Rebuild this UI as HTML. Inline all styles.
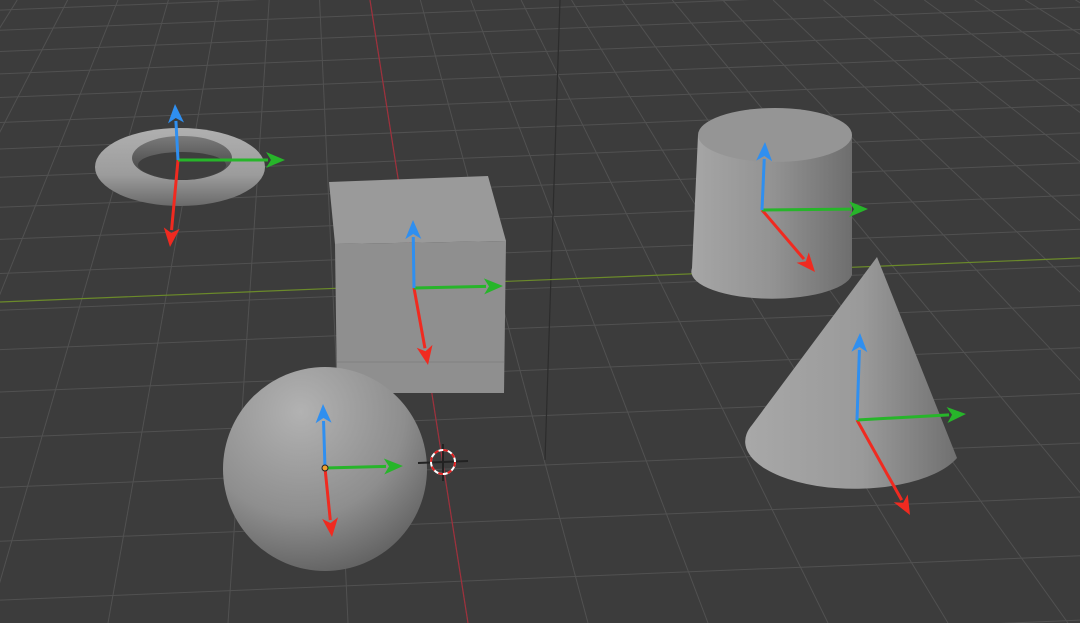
<!DOCTYPE html>
<html><head><meta charset="utf-8"><style>
html,body{margin:0;padding:0;background:#3c3c3c;overflow:hidden;width:1080px;height:623px;position:relative}
svg{display:block;position:absolute;left:0;top:0}
</style></head><body>
<svg id="s" width="1080" height="623" viewBox="0 0 1080 623" xmlns="http://www.w3.org/2000/svg" overflow="hidden">
<defs>
<clipPath id="cp"><rect x="0" y="0" width="1080" height="623"/></clipPath>
<radialGradient id="sph" cx="0.38" cy="0.22" r="0.85">
<stop offset="0" stop-color="#b2b2b2"/><stop offset="0.6" stop-color="#8e8e8e"/><stop offset="1" stop-color="#5c5c5c"/></radialGradient>
<linearGradient id="cyl" x1="0" x2="1" y1="0" y2="0">
<stop offset="0" stop-color="#a6a6a6"/><stop offset="0.5" stop-color="#939393"/><stop offset="1" stop-color="#6e6e6e"/></linearGradient>
<linearGradient id="cone" x1="0" x2="1" y1="0" y2="0">
<stop offset="0" stop-color="#a8a8a8"/><stop offset="0.55" stop-color="#9a9a9a"/><stop offset="1" stop-color="#707070"/></linearGradient>
<linearGradient id="tor" x1="0" x2="0" y1="0" y2="1">
<stop offset="0" stop-color="#b0b0b0"/><stop offset="0.6" stop-color="#9c9c9c"/><stop offset="1" stop-color="#6a6a6a"/></linearGradient>
<linearGradient id="hole" x1="0" x2="0" y1="0" y2="1">
<stop offset="0" stop-color="#7a7a7a"/><stop offset="0.6" stop-color="#555"/><stop offset="1" stop-color="#3c3c3c"/></linearGradient>
</defs>
<g clip-path="url(#cp)">
<g id="grid" stroke="#515151" stroke-width="1" fill="none"></g>
<line x1="560" y1="0" x2="545" y2="460" stroke="#2c2c2c" stroke-width="1.2"/>
<line x1="0" y1="302" x2="1080" y2="258" stroke="#6b8a2a" stroke-width="1.2"/>
<line x1="370" y1="0" x2="468" y2="623" stroke="#a0303c" stroke-width="1.2"/>

<ellipse cx="180" cy="167" rx="85" ry="39" fill="url(#tor)"/>
<ellipse cx="182" cy="158" rx="50" ry="22" fill="url(#hole)"/>
<ellipse cx="182" cy="165" rx="44" ry="13" fill="#3e3e3e"/>

<polygon points="329,182 488,176 506,241 335,244" fill="#9a9a9a"/>
<polygon points="335,244 506,241 504,393 337,393" fill="#8f8f8f"/>
<line x1="337" y1="362" x2="504" y2="362" stroke="#808080"/>

<path d="M698,135 L692,268 A80,27 0 0 0 852,275 L852,135 Z" fill="url(#cyl)"/>
<ellipse cx="775" cy="135" rx="77" ry="27" fill="#959595"/>

<path d="M877,257 L752,425 A104,45 0 0 0 957,458 Z" fill="url(#cone)"/>

<circle cx="325" cy="469" r="102" fill="url(#sph)"/>

<g stroke-width="2">
<line x1="443" y1="444" x2="443" y2="481" stroke="#222"/>
<line x1="418" y1="463" x2="468" y2="461" stroke="#222"/>
<circle cx="443" cy="462" r="12" fill="none" stroke="#fff"/>
<circle cx="443" cy="462" r="12" fill="none" stroke="#e02020" stroke-dasharray="4.7 4.7"/>
</g>

<g id="arrows"></g>
<circle cx="325" cy="468" r="3" fill="#f0a030" stroke="#222" stroke-width="1"/>
</g>
</svg>
<script>
(function(){
var g=document.getElementById('grid'),h='';
for(var n=10;n<60;n++){var y=-772+29880/(n+0.05);if(y<-20||y>650)continue;
 var y0=y+0.041*414,y1=y-0.041*(1080-414);h+='<line x1="0" y1="'+y0+'" x2="1080" y2="'+y1+'"/>';}
var vx=299,vy=-451;
for(var k=-30;k<40;k++){var bx=468+k*120;var t=(0-vy)/(623-vy);
 h+='<line x1="'+(vx+(bx-vx)*t)+'" y1="0" x2="'+bx+'" y2="623"/>';}
g.innerHTML=h;
var a=document.getElementById('arrows'),s='';
function ar(x1,y1,x2,y2,c){var dx=x2-x1,dy=y2-y1,L=Math.sqrt(dx*dx+dy*dy),ux=dx/L,uy=dy/L,hl=19,hw=8;
 var bx=x2-ux*hl,by=y2-uy*hl;
 s+='<line x1="'+x1+'" y1="'+y1+'" x2="'+(bx+ux*2)+'" y2="'+(by+uy*2)+'" stroke="'+c+'" stroke-width="3"/>';
 s+='<polygon fill="'+c+'" points="'+x2+','+y2+' '+(bx-uy*hw)+','+(by+ux*hw)+' '+(bx+ux*5)+','+(by+uy*5)+' '+(bx+uy*hw)+','+(by-ux*hw)+'"/>';}
var B='#2f8ff0',G='#27b52a',R='#f02a20';
[[178,160,175,104,285,160,170,247],[414,288,413,220,503,286,428,365],[325,468,323,404,403,466,332,537],[762,210,765,142,868,209,815,272],[857,420,860,333,966,414,910,515]].forEach(function(o){
 ar(o[0],o[1],o[6],o[7],R);ar(o[0],o[1],o[4],o[5],G);ar(o[0],o[1],o[2],o[3],B);});
a.innerHTML=s;
})();
</script>
</body></html>
